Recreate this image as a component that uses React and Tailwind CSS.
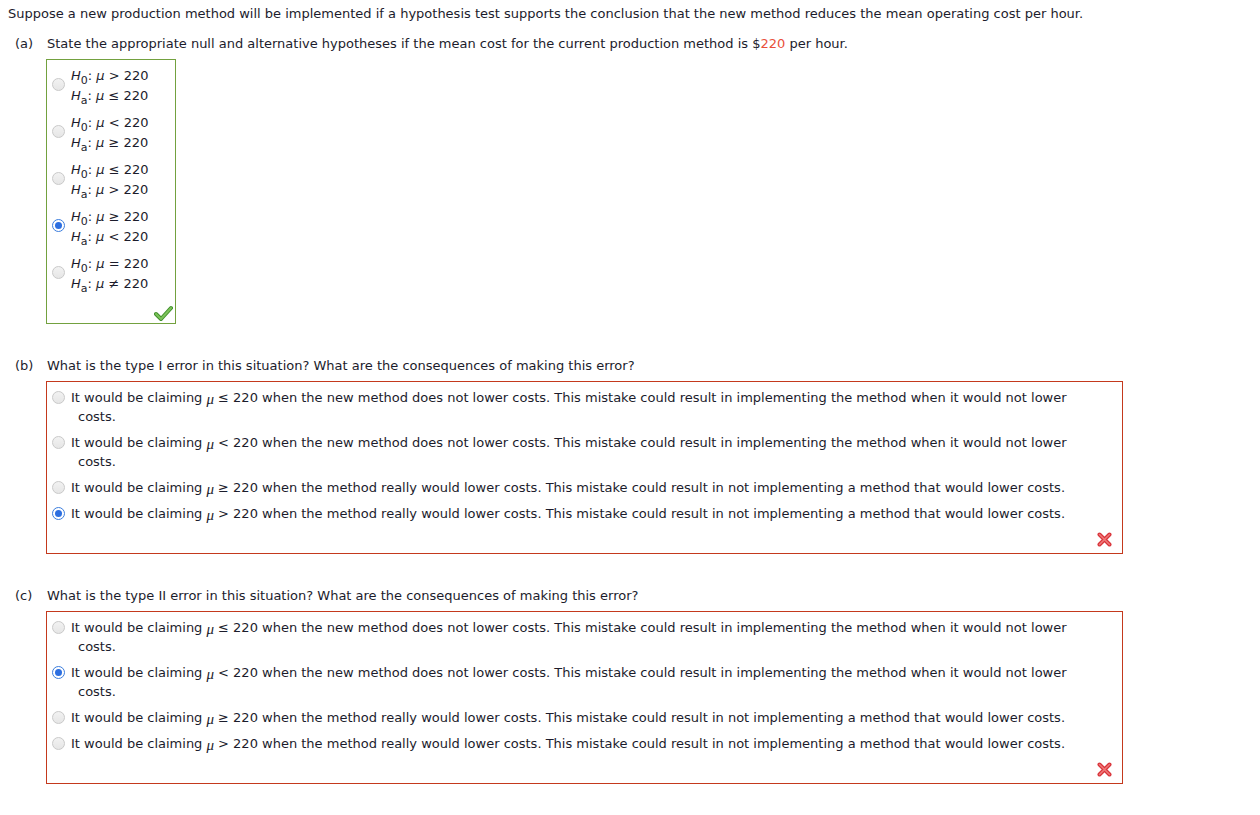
function Radio({ checked }) {
  if (checked) {
    return (
      <span className="flex h-[13px] w-[13px] shrink-0 items-center justify-center rounded-full border border-[#3b7ddd] bg-white">
        <span className="h-[7px] w-[7px] rounded-full bg-[#2d6fe0]" />
      </span>
    )
  }
  return <span className="block h-[13px] w-[13px] shrink-0 rounded-full border border-[#c9c9c9] bg-gradient-to-b from-[#f2f2f2] to-[#e6e6e6]" />
}

function Check() {
  return (
    <svg width="19" height="16" viewBox="0 0 19 16">
      <path d="M2 9 L7 14 L17 3" fill="none" stroke="#3f8f2a" strokeWidth="4" strokeLinecap="round" strokeLinejoin="round" />
      <path d="M2 9 L7 14 L17 3" fill="none" stroke="#7cc35a" strokeWidth="2" strokeLinecap="round" strokeLinejoin="round" />
    </svg>
  )
}

function Cross() {
  return (
    <svg width="15" height="15" viewBox="0 0 15 15">
      <path d="M2.5 2.5 L12.5 12.5 M12.5 2.5 L2.5 12.5" stroke="#d9343a" strokeWidth="4" strokeLinecap="round" />
      <path d="M2.5 2.5 L12.5 12.5 M12.5 2.5 L2.5 12.5" stroke="#f07a7a" strokeWidth="1.5" strokeLinecap="round" />
    </svg>
  )
}

const hyps = [
  [">", "\u2264"],
  ["<", "\u2265"],
  ["\u2264", ">"],
  ["\u2265", "<"],
  ["=", "\u2260"],
]

const errOpts = [
  { sym: "\u2264", rest: "when the new method does not lower costs. This mistake could result in implementing the method when it would not lower", wrap: true },
  { sym: "<", rest: "when the new method does not lower costs. This mistake could result in implementing the method when it would not lower", wrap: true },
  { sym: "\u2265", rest: "when the method really would lower costs. This mistake could result in not implementing a method that would lower costs.", wrap: false },
  { sym: ">", rest: "when the method really would lower costs. This mistake could result in not implementing a method that would lower costs.", wrap: false },
]

function Mu() {
  return <i className="font-['Liberation_Serif',serif] text-[15px] leading-none relative top-[2px] mr-[4px]">μ</i>
}

function H({ sub }) {
  return (
    <>
      <i>H</i>
      <span className="text-[11px] leading-none relative top-[4px]">{sub}</span>
    </>
  )
}

function ErrorBox({ selected }) {
  return (
    <div className="ml-[38px] w-[1077px] border border-[#c4391d] pl-[5px] pr-2 pt-[6px] pb-[6px]">
      <div className="flex flex-col gap-[7px]">
        {errOpts.map((o, i) => (
          <div key={i} className="flex items-start">
            <div className="flex pt-[3px]"><Radio checked={i === selected} /></div>
            <div className="ml-[6px] leading-[19px]">
              <div className="h-[19px] whitespace-nowrap">
                It would be claiming <Mu />{o.sym} 220 {o.rest}
              </div>
              {o.wrap && <div className="h-[19px] pl-[7px]">costs.</div>}
            </div>
          </div>
        ))}
      </div>
      <div className="flex justify-end pr-[2px] pt-[9px]">
        <Cross />
      </div>
    </div>
  )
}

export default function App() {
  return (
    <div className="min-h-screen bg-white text-[13px] text-[#1c1c2c] font-['DejaVu_Sans',Verdana,sans-serif] px-2 pt-[4px]">
      <p className="leading-[19px]">
        Suppose a new production method will be implemented if a hypothesis test supports the conclusion that the new method reduces the mean operating cost per hour.
      </p>

      <div className="mt-[11px] flex leading-[19px]">
        <span className="w-[39px] pl-[7px]">(a)</span>
        <span>
          State the appropriate null and alternative hypotheses if the mean cost for the current production method is $
          <span className="text-[#e9503a]">220</span> per hour.
        </span>
      </div>
      <div className="ml-[38px] mt-[6px] w-[130px] border border-[#73a13f] pt-[6px] pl-[5px]">
        <div className="flex flex-col gap-[7px]">
          {hyps.map((h, i) => (
            <div key={i} className="flex items-center">
              <div className="flex -mt-[4px]"><Radio checked={i === 3} /></div>
              <div className="ml-[6px] leading-[20px]">
                <div className="h-[20px] whitespace-nowrap">
                  <H sub="0" />: <i>μ</i> {h[0]} 220
                </div>
                <div className="h-[20px] whitespace-nowrap">
                  <H sub="a" />: <i>μ</i> {h[1]} 220
                </div>
              </div>
            </div>
          ))}
        </div>
        <div className="flex justify-end pr-[2px] pt-[11px] pb-[2px]">
          <Check />
        </div>
      </div>

      <div className="mt-[32px] flex leading-[19px]">
        <span className="w-[39px] pl-[7px]">(b)</span>
        <span>What is the type I error in this situation? What are the consequences of making this error?</span>
      </div>
      <div className="mt-[6px]">
        <ErrorBox selected={3} />
      </div>

      <div className="mt-[32px] flex leading-[19px]">
        <span className="w-[39px] pl-[7px]">(c)</span>
        <span>What is the type II error in this situation? What are the consequences of making this error?</span>
      </div>
      <div className="mt-[6px]">
        <ErrorBox selected={1} />
      </div>
    </div>
  )
}
